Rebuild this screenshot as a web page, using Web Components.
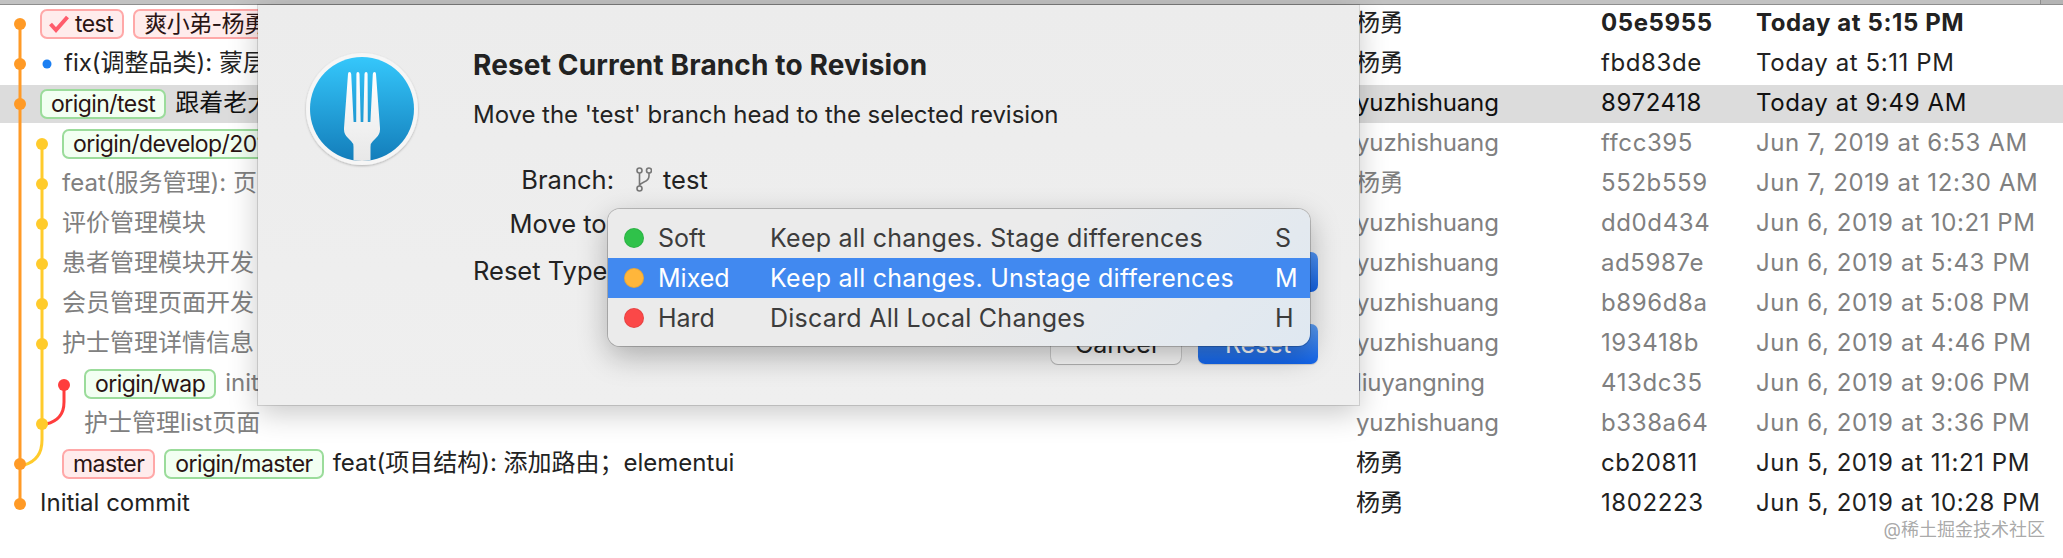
<!DOCTYPE html>
<html>
<head>
<meta charset="utf-8">
<title>Fork reset</title>
<style>
  html, body { margin: 0; padding: 0; background: #fff; }
  body { width: 2063px; height: 558px; overflow: hidden; font-family: Inter, "Noto Sans CJK SC", sans-serif; font-size: 24px; color: #222; }
</style>
</head>
<body>
<commit-list>
  <commit-row author="杨勇" hash="05e5955" date="Today at 5:15 PM" bold indent="40">
    <ref-tag kind="local" current>test</ref-tag><ref-tag kind="local">爽小弟-杨勇</ref-tag>
  </commit-row>
  <commit-row author="杨勇" hash="fbd83de" date="Today at 5:11 PM" indent="64">fix(调整品类): 蒙层</commit-row>
  <commit-row author="yuzhishuang" hash="8972418" date="Today at 9:49 AM" selected indent="40">
    <ref-tag kind="remote">origin/test</ref-tag>跟着老大
  </commit-row>
  <commit-row author="yuzhishuang" hash="ffcc395" date="Jun 7, 2019 at 6:53 AM" dim indent="62">
    <ref-tag kind="remote">origin/develop/2019</ref-tag>
  </commit-row>
  <commit-row author="杨勇" hash="552b559" date="Jun 7, 2019 at 12:30 AM" dim indent="62">feat(服务管理): 页面</commit-row>
  <commit-row author="yuzhishuang" hash="dd0d434" date="Jun 6, 2019 at 10:21 PM" dim indent="62">评价管理模块</commit-row>
  <commit-row author="yuzhishuang" hash="ad5987e" date="Jun 6, 2019 at 5:43 PM" dim indent="62">患者管理模块开发</commit-row>
  <commit-row author="yuzhishuang" hash="b896d8a" date="Jun 6, 2019 at 5:08 PM" dim indent="62">会员管理页面开发</commit-row>
  <commit-row author="yuzhishuang" hash="193418b" date="Jun 6, 2019 at 4:46 PM" dim indent="62">护士管理详情信息</commit-row>
  <commit-row author="liuyangning" hash="413dc35" date="Jun 6, 2019 at 9:06 PM" dim indent="84">
    <ref-tag kind="remote">origin/wap</ref-tag>init
  </commit-row>
  <commit-row author="yuzhishuang" hash="b338a64" date="Jun 6, 2019 at 3:36 PM" dim indent="84">护士管理list页面</commit-row>
  <commit-row author="杨勇" hash="cb20811" date="Jun 5, 2019 at 11:21 PM" indent="62">
    <ref-tag kind="local">master</ref-tag><ref-tag kind="remote">origin/master</ref-tag>feat(项目结构): 添加路由；elementui
  </commit-row>
  <commit-row author="杨勇" hash="1802223" date="Jun 5, 2019 at 10:28 PM" indent="40">Initial commit</commit-row>
</commit-list>
<reset-dialog></reset-dialog>
<water-mark>@稀土掘金技术社区</water-mark>

<script>
class RefTag extends HTMLElement {
  constructor() {
    super();
    this.attachShadow({ mode: "open" });
  }
  connectedCallback() {
    const check = this.hasAttribute("current")
      ? `<svg width="20" height="18" viewBox="0 0 20 18"><path d="M1.5 9l5.5 6L18.5 2" fill="none" stroke="#ff5c6c" stroke-width="4"/></svg>`
      : "";
    this.shadowRoot.innerHTML = `
      <style>
        :host{display:inline-flex;align-items:center;gap:6px;box-sizing:border-box;height:30px;padding:0 9px;margin:2px 9px 0 0;border:2px solid;border-radius:7px;font-size:23px;letter-spacing:-.55px;color:#2a1414;white-space:nowrap;flex:none}
        :host([current]){padding:0 9px 0 7px}
        :host([kind=local]){border-color:#ffa8a8;background:#ffecec}
        :host([kind=remote]){border-color:#9bdc9b;background:#f2fff2}
      </style>
      ${check}<slot></slot>
    `;
  }
}
customElements.define("ref-tag", RefTag);

class CommitRow extends HTMLElement {
  constructor() {
    super();
    this.attachShadow({ mode: "open" });
  }
  connectedCallback() {
    this.shadowRoot.innerHTML = `
      <style>
        :host{display:grid;grid-template-columns:1356px 245px 155px 1fr;align-items:center;box-sizing:border-box;height:38px;padding-bottom:2px;line-height:26px;white-space:nowrap;color:#222}
        :host([dim]){color:#808080}
        :host([bold]) .meta{font-weight:700}
        :host([selected]){background:#dcdcdc;color:#111}
        .subject{display:flex;align-items:center;overflow:hidden;height:34px}
        .meta{letter-spacing:.6px}
        .author{letter-spacing:-.15px}
      </style>
      <div class="subject" style="padding-left:${this.getAttribute("indent") || 0}px"><slot></slot></div>
      <div class="author">${this.getAttribute("author")}</div>
      <div class="meta">${this.getAttribute("hash")}</div>
      <div class="meta">${this.getAttribute("date")}</div>
    `;
  }
}
customElements.define("commit-row", CommitRow);

class CommitGraph extends HTMLElement {
  constructor() {
    super();
    this.attachShadow({ mode: "open" });
  }
  connectedCallback() {
    const dot = (x, y, c, r = 6) => `<circle cx="${x}" cy="${y}" r="${r}" fill="${c}"/>`;
    const orange = "#ff9a26", yellow = "#ffcb2c", red = "#ff3d3d";
    const dots = [];
    [24, 64, 104, 464, 504].forEach(y => dots.push(dot(20, y, orange)));
    [144, 184, 224, 264, 304, 344, 424].forEach(y => dots.push(dot(42, y, yellow)));
    dots.push(dot(64, 385, red));
    dots.push(dot(47, 64, "#1b7ff2", 4.5));
    this.shadowRoot.innerHTML = `
      <style>:host{position:absolute;left:0;top:0;display:block;width:90px;height:558px;pointer-events:none}</style>
      <svg width="90" height="558" viewBox="0 0 90 558">
        <path d="M20 24V504" fill="none" stroke="${orange}" stroke-width="3"/>
        <path d="M42 144V440Q42 460 24 465" fill="none" stroke="${yellow}" stroke-width="3"/>
        <path d="M64 385V402Q64 420 46 424" fill="none" stroke="${red}" stroke-width="3"/>
        ${dots.join("")}
      </svg>
    `;
  }
}
customElements.define("commit-graph", CommitGraph);

class CommitList extends HTMLElement {
  constructor() {
    super();
    this.attachShadow({ mode: "open" });
  }
  connectedCallback() {
    this.shadowRoot.innerHTML = `
      <style>
        :host{display:block;position:relative;height:558px}
        .top{display:flex;height:4px;background:#c2c2c2;border-bottom:1px solid #8e8e8e}
        .top i{margin-left:2040px;flex:1;background:#b4b4b4;border-left:1px solid #8e8e8e}
        .rows{display:flex;flex-direction:column;gap:2px}
      </style>
      <div class="top"><i></i></div>
      <div class="rows"><slot></slot></div>
      <commit-graph></commit-graph>
    `;
  }
}
customElements.define("commit-list", CommitList);

class MenuItem extends HTMLElement {
  constructor() {
    super();
    this.attachShadow({ mode: "open" });
  }
  connectedCallback() {
    this.shadowRoot.innerHTML = `
      <style>
        :host{display:grid;grid-template-columns:20px 112px 1fr 35px;align-items:center;height:40px;padding-left:16px;font-size:25px;color:#3c3c3c;white-space:nowrap}
        :host([active]){background:#4189f0;color:#fff}
        .dot{width:20px;height:20px;border-radius:50%;background:var(--dot);box-sizing:border-box;border:1px solid rgba(0,0,0,.08)}
        .label{padding-left:14px}
      </style>
      <span class="dot" style="--dot:${this.getAttribute("color")}"></span>
      <span class="label">${this.getAttribute("label")}</span>
      <span style="padding-left:14px;letter-spacing:.25px"><slot></slot></span>
      <span>${this.getAttribute("key")}</span>
    `;
  }
}
customElements.define("menu-item", MenuItem);

class ResetMenu extends HTMLElement {
  constructor() {
    super();
    this.attachShadow({ mode: "open" });
  }
  connectedCallback() {
    this.shadowRoot.innerHTML = `
      <style>
        :host{position:absolute;left:350px;top:204px;width:702px;box-sizing:border-box;padding:9px 0 8px;border-radius:12px;background:linear-gradient(135deg,#ebebeb 55%,#dfe8f1);box-shadow:0 0 0 1px rgba(0,0,0,.2),0 10px 30px rgba(0,0,0,.28)}
      </style>
      <slot></slot>
    `;
  }
}
customElements.define("reset-menu", ResetMenu);

class ForkIcon extends HTMLElement {
  constructor() {
    super();
    this.attachShadow({ mode: "open" });
  }
  connectedCallback() {
    this.shadowRoot.innerHTML = `
      <style>:host{display:block;width:120px;height:120px;flex:none}</style>
      <svg width="120" height="120" viewBox="0 0 120 120">
        <defs>
          <linearGradient id="b" x1="0" y1="0" x2="0" y2="1"><stop offset="0" stop-color="#35c7fb"/><stop offset="1" stop-color="#137dba"/></linearGradient>
          <linearGradient id="f" x1="0" y1="0" x2="0" y2="1"><stop offset="0" stop-color="#fff"/><stop offset="1" stop-color="#e6e6e6"/></linearGradient>
          <clipPath id="c"><circle cx="60" cy="60" r="52"/></clipPath>
          <filter id="s" x="-10%" y="-10%" width="120%" height="120%"><feDropShadow dx="0" dy="1" stdDeviation="1" flood-color="#000" flood-opacity=".25"/></filter>
        </defs>
        <circle cx="60" cy="60" r="56" fill="#f6f6f6" filter="url(#s)"/>
        <circle cx="60" cy="60" r="52" fill="url(#b)"/>
        <path clip-path="url(#c)" fill="url(#f)" d="M46 25Q46 23 47.5 23Q49 23 49.2 25L51.6 73H54.2L54.4 25Q54.4 23 55.9 23Q57.4 23 57.5 25L58.7 73H61.3L62.5 25Q62.6 23 64.1 23Q65.6 23 65.6 25L65.8 73H68.4L70.8 25Q71 23 72.5 23Q74 23 74 25L78 79Q78.4 85 74 89L71 92Q68.5 94 68.5 98V120H51.5V98Q51.5 94 49 92L46 89Q41.6 85 42 79Z"/>
      </svg>
    `;
  }
}
customElements.define("fork-icon", ForkIcon);

class DialogButton extends HTMLElement {
  constructor() {
    super();
    this.attachShadow({ mode: "open" });
  }
  connectedCallback() {
    this.shadowRoot.innerHTML = `
      <style>
        :host{display:flex;align-items:center;justify-content:center;box-sizing:border-box;height:40px;width:130px;border-radius:7px;background:#f7f7f7;color:#222;font-size:25px;box-shadow:0 0 0 1px rgba(0,0,0,.14),0 1px 1px rgba(0,0,0,.15)}
        :host([primary]){width:120px;color:#fff;background:linear-gradient(#5a9bf0,#1264ea);box-shadow:0 1px 1px rgba(0,0,0,.15)}
      </style>
      <slot></slot>
    `;
  }
}
customElements.define("dialog-button", DialogButton);

class ResetDialog extends HTMLElement {
  constructor() {
    super();
    this.attachShadow({ mode: "open" });
  }
  connectedCallback() {
    this.shadowRoot.innerHTML = `
      <style>
        :host{position:absolute;left:258px;top:5px;width:1101px;height:400px;box-sizing:border-box;display:flex;background:linear-gradient(#ececec,#efefef);box-shadow:0 0 0 1px rgba(0,0,0,.13),0 8px 28px rgba(0,0,0,.22);padding:44px 41px 41px 44px;color:#222}
        .main{flex:1;display:flex;flex-direction:column;margin-left:51px}
        h1{margin:-1px 0 0;font-size:28px;line-height:34px;font-weight:700;letter-spacing:.15px}
        p{margin:16px 0 0;line-height:34px;letter-spacing:-.05px}
        .form{display:grid;grid-template-columns:141px 1fr;column-gap:22px;grid-template-rows:44px 44px 51px;align-items:center;margin-top:26px;font-size:25.5px}
        .label{text-align:right;white-space:nowrap;padding-bottom:2px}
        .val{display:flex;align-items:center;gap:11px;padding-bottom:2px}
        .popup{height:40px;border-radius:7px;background:linear-gradient(#4f93f3,#1362e4)}
        .foot{margin-top:auto;display:flex;justify-content:flex-end;gap:17px}
      </style>
      <fork-icon></fork-icon>
      <div class="main">
        <h1>Reset Current Branch to Revision</h1>
        <p>Move the 'test' branch head to the selected revision</p>
        <div class="form">
          <div class="label">Branch:</div>
          <div class="val">
            <svg width="16" height="25" viewBox="0 0 16 25" fill="none" stroke="#777" stroke-width="1.6"><circle cx="3.5" cy="3.5" r="2.5"/><circle cx="13" cy="3.5" r="2.5"/><circle cx="3.5" cy="21.5" r="2.5"/><path d="M3.5 6V19M13 6V9Q13 13 8 15Q3.5 17 3.5 19"/></svg>
            <span>test</span>
          </div>
          <div class="label">Move to:</div>
          <div></div>
          <div class="label">Reset Type:</div>
          <div class="popup"></div>
        </div>
        <div class="foot">
          <dialog-button>Cancel</dialog-button>
          <dialog-button primary>Reset</dialog-button>
        </div>
      </div>
      <reset-menu>
        <menu-item color="#2fc24a" label="Soft" key="S">Keep all changes. Stage differences</menu-item>
        <menu-item color="#ffb63b" label="Mixed" key="M" active>Keep all changes. Unstage differences</menu-item>
        <menu-item color="#fb4848" label="Hard" key="H">Discard All Local Changes</menu-item>
      </reset-menu>
    `;
  }
}
customElements.define("reset-dialog", ResetDialog);

class WaterMark extends HTMLElement {
  constructor() {
    super();
    this.attachShadow({ mode: "open" });
  }
  connectedCallback() {
    this.shadowRoot.innerHTML = `
      <style>:host{position:absolute;right:18px;top:519px;font-size:18px;line-height:22px;color:rgba(120,120,120,.65);white-space:nowrap}</style>
      <slot></slot>
    `;
  }
}
customElements.define("water-mark", WaterMark);
</script>
</body>
</html>
